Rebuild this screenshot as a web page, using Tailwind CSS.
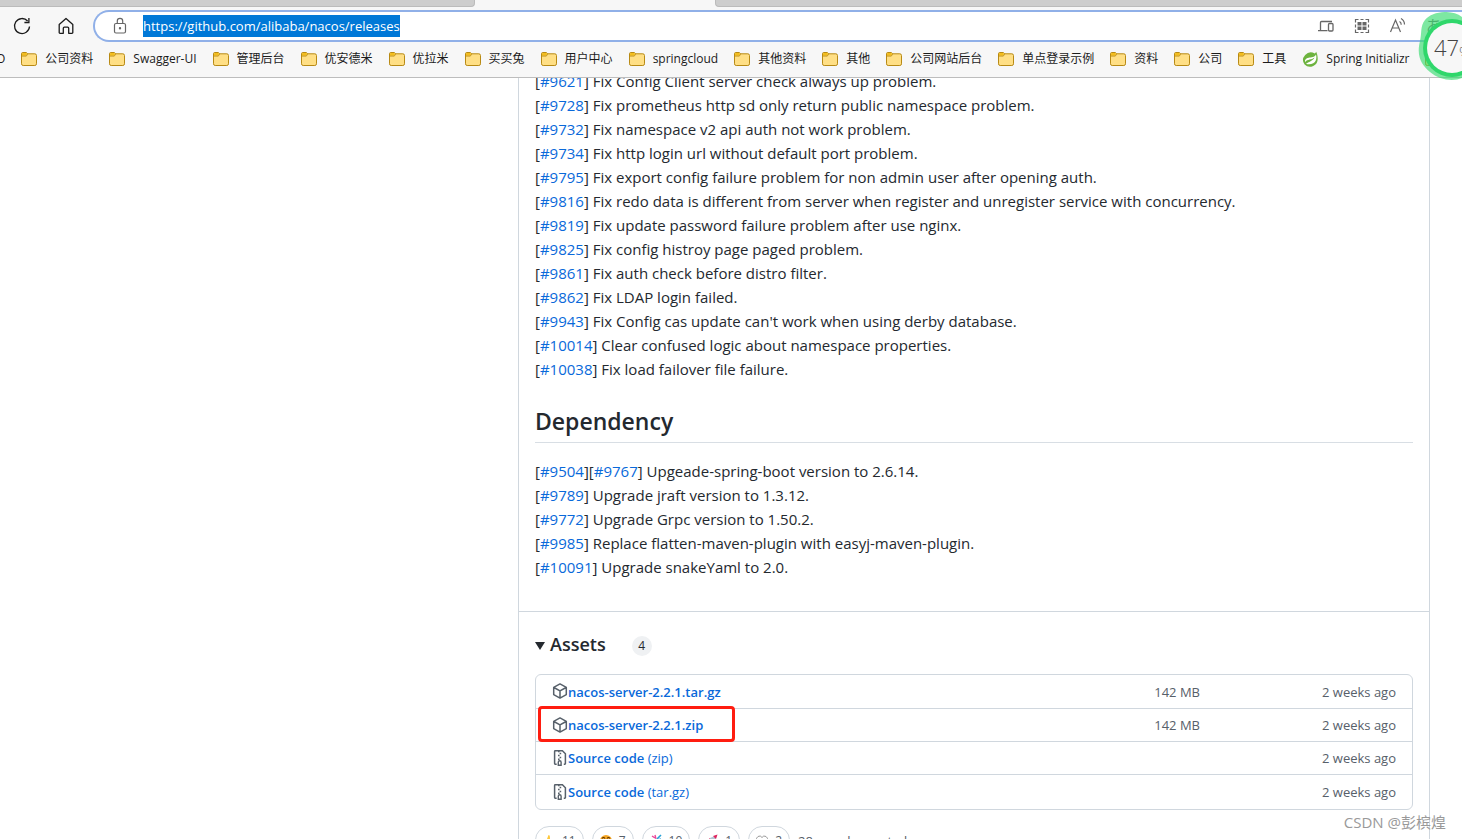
<!DOCTYPE html>
<html lang="zh">
<head>
    <meta charset="UTF-8">
    <meta name="viewport" content="width=device-width, initial-scale=1.0">
    <title>Releases · alibaba/nacos</title>
    <script src="https://cdn.jsdelivr.net/npm/@tailwindcss/browser@4"></script>
</head>
<body class="relative h-screen overflow-hidden flex flex-col bg-white text-[#24292f] font-['Open_Sans','Noto_Sans_CJK_SC',sans-serif]">
    <!-- Shared icons -->
    <svg class="hidden">
        <symbol id="folder" viewBox="0 0 16 16">
            <path d="M.5 2.800a1.300 1.300 0 0 1 1.300-1.300h3.500l1.500 1.300h7a1.700 1.700 0 0 1 1.700 1.700v8.300a1.700 1.700 0 0 1-1.700 1.700H2.200a1.700 1.700 0 0 1-1.700-1.700z" fill="#ffdf85" stroke="#b88a14"/>
            <path d="M1 4.700V2.900a.9.9 0 0 1 .9-.9h3.200l1.200 1.100-1.200 1.600z" fill="#f3bd1d"/>
            <path d="M.5 5.100h4.800l1.500-2.200" fill="none" stroke="#b88a14" stroke-width=".8"/>
        </symbol>
        <symbol id="package" viewBox="0 0 16 16">
            <path d="M8 .9 14.300 4.400v7.200L8 15.100 1.700 11.600V4.400zM1.900 4.500 8 7.900l6.100-3.400M8 7.900v7" fill="none" stroke="#57606a" stroke-width="1.500" stroke-linejoin="round"/>
        </symbol>
        <symbol id="file-zip" viewBox="0 0 16 16">
            <path d="M4.700 14.200H3.200a.6.6 0 0 1-.6-.6V1.400a.6.6 0 0 1 .6-.6h7.200l3 3v9.800a.6.6 0 0 1-.6.6h-1" fill="none" stroke="#57606a" stroke-width="1.500"/>
            <path d="M6 1.500h1.600M7.600 3.500h1.600M6 5.500h1.600M7.600 7.500h1.600M6 9.300h1.600" stroke="#57606a" stroke-width="1.400"/>
            <path d="M6.300 15.200v-3a1.400 1.400 0 0 1 2.800 0v3z" fill="none" stroke="#57606a" stroke-width="1.400"/>
        </symbol>
    </svg>

    <!-- Browser toolbar -->
    <header class="relative z-10 shrink-0 bg-[#f7f7f7] border-b border-[#bdbdbd]">
        <div class="flex h-[7px]">
            <div class="w-[475px] shrink-0 bg-[#cdcdcd] border-b border-r border-[#bbb] rounded-br"></div>
            <div class="w-60 shrink-0"></div>
            <div class="flex-1 bg-[#cdcdcd] border-b border-l border-[#bbb] rounded-bl"></div>
        </div>
        <div class="flex items-center pt-[3px] pl-3">
            <button aria-label="Refresh" class="size-5">
                <svg class="size-5" viewBox="0 0 20 20" fill="none" stroke="#1b1b1b" stroke-width="1.300"><path d="M17.500 10.500A7.500 7.500 0 1 1 15.600 5M16.900 2v4.500h-4.500"/></svg>
            </button>
            <button aria-label="Home" class="ml-6 size-5">
                <svg class="size-5" viewBox="0 0 20 20" fill="none" stroke="#1b1b1b" stroke-width="1.300" stroke-linejoin="round"><path d="M3.200 8.400 10 2.400l6.800 6v8.100a.8.8 0 0 1-.8.8h-3.300v-5.100a1 1 0 0 0-1-1H8.300a1 1 0 0 0-1 1v5.100H4a.8.8 0 0 1-.8-.8z"/></svg>
            </button>
            <div class="ml-[17px] flex-1 h-8 flex items-center bg-white border-2 border-r-0 border-[#90b0e8] rounded-l-full pl-4 pr-[18px]">
                <svg class="size-5 shrink-0" viewBox="0 0 20 20" fill="none" stroke="#666" stroke-width="1.200"><rect x="3.500" y="7.500" width="11" height="9.500" rx="1.500"/><path d="M6.300 7.500V5a2.700 2.700 0 0 1 5.400 0v2.500"/><circle cx="9" cy="12.200" r=".6" fill="#666"/></svg>
                <div class="ml-3 flex-1 min-w-0 flex items-center">
                    <input type="text" aria-label="Address" value="https://github.com/alibaba/nacos/releases" class="[field-sizing:content] h-[22px] bg-[#0078d7] text-white text-[13px] outline-none">
                </div>
                <div class="flex items-center gap-4">
                    <button aria-label="Send to devices"><svg class="size-5" viewBox="0 0 20 20" fill="none" stroke="#666" stroke-width="1.300"><path d="M4.500 14V6.500a1 1 0 0 1 1-1H16M2 14.700h9.500"/><rect x="12.500" y="7.500" width="4.500" height="7.500" rx="1"/></svg></button>
                    <button aria-label="QR code"><svg class="size-5" viewBox="0 0 20 20" fill="none" stroke="#666" stroke-width="1.200"><path d="M3.500 6.500v-3h3M13.500 3.500h3v3M16.500 13.500v3h-3M6.500 16.500h-3v-3M8.500 3.500h3M8.500 16.500h3M3.500 8.500v3M16.500 8.500v3"/><path d="M5.500 6h4v3.500h-4zM10.500 6h4v3.500h-4zM5.500 10.500h4V14h-4zM10.500 10.500h4V14h-4z" fill="#666" stroke="none"/></svg></button>
                    <button aria-label="Read aloud"><svg class="size-5" viewBox="0 0 20 20" fill="none" stroke="#666" stroke-width="1.200"><path d="M2.500 16 7.500 4l5 12M4.300 12h6.400M11.500 5.500a3.500 3.500 0 0 1 1.700 3.200M13 2.500a7 7 0 0 1 3.500 6"/></svg></button>
                    <button aria-label="Translate" class="w-5 text-base leading-5 text-[#666]">あ</button>
                </div>
            </div>
        </div>
        <!-- Bookmarks -->
        <nav class="h-[34px] flex items-center gap-4 overflow-hidden whitespace-nowrap text-xs text-[#1b1b1b] *:flex *:items-center *:gap-2 *:shrink-0 mb-px">
            <a href="#" class="-ml-1">O</a>
            <a href="#"><svg class="size-4"><use href="#folder"/></svg>公司资料</a>
            <a href="#"><svg class="size-4"><use href="#folder"/></svg>Swagger-UI</a>
            <a href="#"><svg class="size-4"><use href="#folder"/></svg>管理后台</a>
            <a href="#"><svg class="size-4"><use href="#folder"/></svg>优安德米</a>
            <a href="#"><svg class="size-4"><use href="#folder"/></svg>优拉米</a>
            <a href="#"><svg class="size-4"><use href="#folder"/></svg>买买兔</a>
            <a href="#"><svg class="size-4"><use href="#folder"/></svg>用户中心</a>
            <a href="#"><svg class="size-4"><use href="#folder"/></svg>springcloud</a>
            <a href="#"><svg class="size-4"><use href="#folder"/></svg>其他资料</a>
            <a href="#"><svg class="size-4"><use href="#folder"/></svg>其他</a>
            <a href="#"><svg class="size-4"><use href="#folder"/></svg>公司网站后台</a>
            <a href="#"><svg class="size-4"><use href="#folder"/></svg>单点登录示例</a>
            <a href="#"><svg class="size-4"><use href="#folder"/></svg>资料</a>
            <a href="#"><svg class="size-4"><use href="#folder"/></svg>公司</a>
            <a href="#"><svg class="size-4"><use href="#folder"/></svg>工具</a>
            <a href="#">
                <svg class="size-4" viewBox="0 0 16 16"><path d="M14.200.8c.8 1.900 1.500 4 1.500 6.700A7.800 7.800 0 0 1 2.600 13.600 7.700 7.700 0 0 1 12.800 2.500 7 7 0 0 0 14.200.8z" fill="#6db33f"/><path d="M14 3.500c-1.500 3-4.500 2.800-7.300 3.200C4 7.200 2.600 8.800 3 11.200c2.500-3.500 6.500-2 9.500-4.700-1.500 3.500-5 3.800-8.500 6.300 3 1.200 8.500.7 10-3.800.6-2 .4-4 0-5.500z" fill="#fff"/></svg>
                Spring Initializr
            </a>
            <a href="#" aria-label="Folder"><svg class="size-4"><use href="#folder"/></svg></a>
        </nav>
    </header>

    <!-- Release notes -->
    <main class="flex-1 min-h-0 overflow-hidden pl-[518px] pr-8">
        <article class="border-x border-[#d0d7de]">
            <section class="px-4 pb-8">
                <div class="-mt-[9px] text-[15px] leading-6 [&_a]:text-[#0969da]">
                    <p>[<a href="#">#9621</a>] Fix Config Client server check always up problem.</p>
                    <p>[<a href="#">#9728</a>] Fix prometheus http sd only return public namespace problem.</p>
                    <p>[<a href="#">#9732</a>] Fix namespace v2 api auth not work problem.</p>
                    <p>[<a href="#">#9734</a>] Fix http login url without default port problem.</p>
                    <p>[<a href="#">#9795</a>] Fix export config failure problem for non admin user after opening auth.</p>
                    <p>[<a href="#">#9816</a>] Fix redo data is different from server when register and unregister service with concurrency.</p>
                    <p>[<a href="#">#9819</a>] Fix update password failure problem after use nginx.</p>
                    <p>[<a href="#">#9825</a>] Fix config histroy page paged problem.</p>
                    <p>[<a href="#">#9861</a>] Fix auth check before distro filter.</p>
                    <p>[<a href="#">#9862</a>] Fix LDAP login failed.</p>
                    <p>[<a href="#">#9943</a>] Fix Config cas update can't work when using derby database.</p>
                    <p>[<a href="#">#10014</a>] Clear confused logic about namespace properties.</p>
                    <p>[<a href="#">#10038</a>] Fix load failover file failure.</p>
                </div>
                <h2 class="mt-6 mb-4 pt-px pb-1.5 border-b border-[#d8dee4] text-[23px] leading-[30px] font-semibold">Dependency</h2>
                <div class="text-[15px] leading-6 [&_a]:text-[#0969da]">
                    <p>[<a href="#">#9504</a>][<a href="#">#9767</a>] Upgeade-spring-boot version to 2.6.14.</p>
                    <p>[<a href="#">#9789</a>] Upgrade jraft version to 1.3.12.</p>
                    <p>[<a href="#">#9772</a>] Upgrade Grpc version to 1.50.2.</p>
                    <p>[<a href="#">#9985</a>] Replace flatten-maven-plugin with easyj-maven-plugin.</p>
                    <p>[<a href="#">#10091</a>] Upgrade snakeYaml to 2.0.</p>
                </div>
            </section>

            <!-- Assets -->
            <section class="px-4 pt-4 border-t border-[#d0d7de]">
                <details open>
                    <summary class="h-8 flex items-center cursor-pointer list-none">
                        <svg class="w-[10px] h-2 mt-1 mr-[5px]" viewBox="0 0 10 8"><path d="M0 0h10L5 8z" fill="#24292f"/></svg>
                        <span class="text-lg font-semibold">Assets</span>
                        <span class="ml-[26px] mt-1 size-5 rounded-full bg-[#eff1f3] text-xs leading-5 font-medium text-center">4</span>
                    </summary>
                    <div class="mt-[14px] border border-[#d0d7de] rounded-md">
                        <table class="w-full text-[13px] text-[#57606a] [&_a]:text-[#0969da] [&_b]:font-semibold [&_td]:h-[33px] [&_td]:p-0 [&_td]:pt-0.5 [&_tr:last-child_td]:h-[35px] [&_svg]:mb-0.5">
                            <tbody class="divide-y divide-[#d0d7de]">
                                <tr>
                                    <td><div class="flex items-center pl-4"><svg class="size-4"><use href="#package"/></svg><a href="#"><b>nacos-server-2.2.1.tar.gz</b></a></div></td>
                                    <td class="w-24 text-right">142 MB</td>
                                    <td class="w-[212px] text-right"><span class="pr-4">2 weeks ago</span></td>
                                </tr>
                                <tr>
                                    <td class="relative">
                                        <div class="flex items-center pl-4"><svg class="size-4"><use href="#package"/></svg><a href="#"><b>nacos-server-2.2.1.zip</b></a></div>
                                        <div class="absolute -top-[3px] -bottom-px left-0.5 w-[197px] border-3 border-[#ff1d10] rounded-sm"></div>
                                    </td>
                                    <td class="text-right">142 MB</td>
                                    <td class="text-right"><span class="pr-4">2 weeks ago</span></td>
                                </tr>
                                <tr>
                                    <td><div class="flex items-center pl-4"><svg class="size-4"><use href="#file-zip"/></svg><a href="#"><b>Source code</b> (zip)</a></div></td>
                                    <td></td>
                                    <td class="text-right"><span class="pr-4">2 weeks ago</span></td>
                                </tr>
                                <tr>
                                    <td><div class="flex items-center pl-4"><svg class="size-4"><use href="#file-zip"/></svg><a href="#"><b>Source code</b> (tar.gz)</a></div></td>
                                    <td></td>
                                    <td class="text-right"><span class="pr-4">2 weeks ago</span></td>
                                </tr>
                            </tbody>
                        </table>
                    </div>
                </details>

                <!-- Reactions -->
                <div class="mt-4 flex items-center gap-2 text-xs text-[#57606a] [&_button]:h-7 [&_button]:pt-0.5 [&_button]:flex [&_button]:items-center [&_button]:gap-[7px] [&_button]:px-[7px] [&_button]:border [&_button]:border-[#d0d7de] [&_button]:rounded-full">
                    <button><svg class="w-3 h-4" viewBox="0 0 12 16"><path d="M5.500 2c1.500 0 1.500 2 1.500 4h4v8H3L1 9l3-3z" fill="#ffc83d"/></svg>11</button>
                    <button><svg class="w-3 h-4" viewBox="0 0 12 16"><circle cx="6" cy="8" r="6" fill="#f5a623"/><path d="M2 5.500q1.500-2 3 0M7 5.500q1.500-2 3 0M3 9q3 3 6 0" fill="none" stroke="#5d3300" stroke-width="1.200"/></svg>7</button>
                    <button><svg class="w-3 h-4" viewBox="0 0 12 16"><path d="M1 14 4 6l5 5z" fill="#ffc83d"/><path d="M2 3l3 2M5 2l1 4" stroke="#ec4899" stroke-width="1.400"/><path d="M11 2 7 6M11 6l-3 1" stroke="#29a3d8" stroke-width="1.600"/></svg>10</button>
                    <button><svg class="w-3 h-4" viewBox="0 0 12 16"><path d="M11 2 8 10l-4 2-2-2 2-5z" fill="#b4c6d6"/><path d="M11.500 1.500 7 3l3 3zM4 5 1 8l3 1zM8 9l-1 4-2-2z" fill="#e0245e"/></svg>1</button>
                    <button><svg class="w-3 h-4" viewBox="0 0 12 16"><path d="M6 13 1 7.500A2.800 2.800 0 0 1 6 4.500a2.800 2.800 0 0 1 5 3z" fill="#fff" stroke="#9a9a9a"/></svg>2</button>
                    <span class="pt-1 text-[13px]">28 people reacted</span>
                </div>
            </section>
        </article>
    </main>

    <!-- Floating usage meter -->
    <div class="absolute top-3 right-0 z-20 w-11 h-[68px] overflow-hidden">
        <svg class="absolute inset-0 w-11 h-[68px]" viewBox="0 0 44 68">
            <path d="M44 5C34-3 14-1 7 8 2 14 4 21 2 29c-4 16 2 24 10 31 9 8 23 10 32 6z" fill="#37dc70" fill-opacity=".65"/>
            <circle cx="34" cy="36" r="29" fill="#2fd76b"/>
            <circle cx="34" cy="36" r="25" fill="#f7f7f7"/>
        </svg>
        <div class="relative pl-4 pt-5 flex items-baseline whitespace-nowrap font-light text-[#444]"><span class="text-[22px] leading-[30px]">47</span><span class="text-xs">%</span></div>
    </div>

    <!-- Watermark -->
    <div class="absolute right-4 bottom-[7px] z-20 text-[15px] leading-5 text-[#999]">CSDN @彭槟煌</div>
</body>
</html>
